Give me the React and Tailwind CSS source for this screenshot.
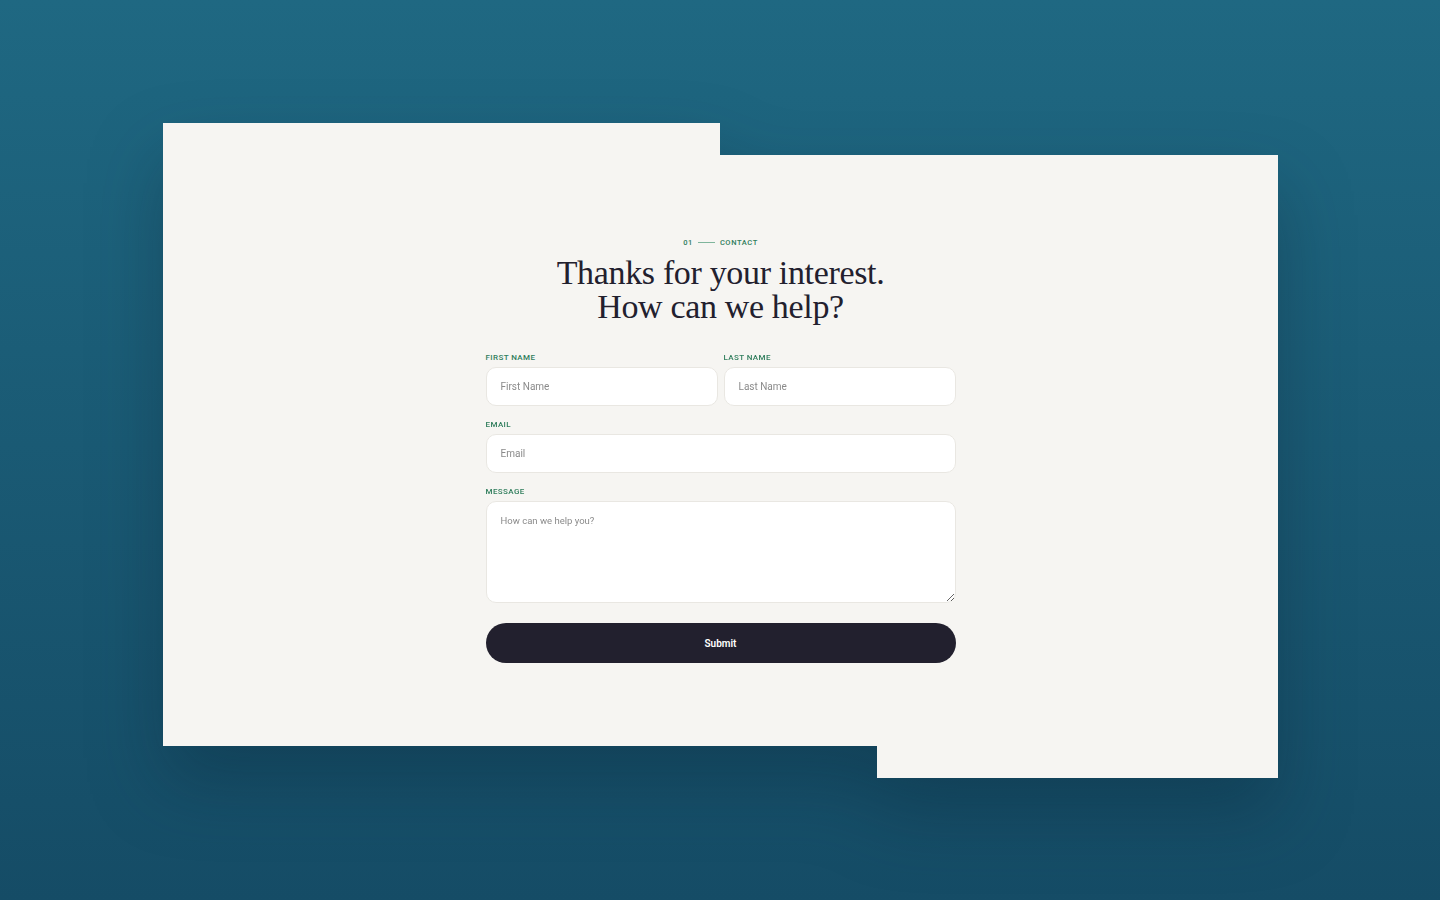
import React from 'react';

// Kontaktformular auf gestufter Karte
const Label = ({ children }) => (
  <label className="mb-[4px] text-[8px] font-medium uppercase leading-[10px] tracking-[0.05em] text-[#2f7d5c]">
    {children}
  </label>
);

const Field = ({ label, placeholder, className = '' }) => (
  <div className={`flex flex-col ${className}`}>
    <Label>{label}</Label>
    <input
      type="text"
      placeholder={placeholder}
      className="h-[39px] w-full rounded-[10px] border border-[#e9e7e2] bg-white px-[14px] text-[10px] text-[#333] placeholder:text-[#8a8a8a] outline-none"
    />
  </div>
);

export default function App() {
  return (
    <div
      className="relative h-[900px] w-full overflow-hidden bg-gradient-to-b from-[#1f6882] to-[#154c66]"
      style={{ fontFamily: 'Roboto, "Noto Sans", sans-serif' }}
    >
      <div className="absolute left-[163px] top-[123px] [filter:drop-shadow(0_36px_36px_rgba(8,30,45,0.3))]">
        <div className="h-[655px] w-[1115px] bg-[#f6f5f2] [clip-path:polygon(0_0,557px_0,557px_32px,100%_32px,100%_100%,714px_100%,714px_623px,0_623px)]">
          <div className="flex flex-col items-center pt-[114px]">
            <div className="flex items-center gap-[5px] text-[7.5px] font-medium uppercase tracking-[0.08em] text-[#2f7d5c]">
              <span>01</span>
              <span className="h-px w-[17px] bg-[#7fb59c]"></span>
              <span>Contact</span>
            </div>
            <h1
              className="mt-[8px] text-center text-[34px] leading-[34px] tracking-[-0.01em] text-[#22202e]"
              style={{ fontFamily: '"Liberation Serif", "DejaVu Serif", serif' }}
            >
              Thanks for your interest.
              <br />
              How can we help?
            </h1>

            <form className="mt-[29px] flex w-[470px] flex-col" onSubmit={(e) => e.preventDefault()}>
              <div className="flex gap-[6px]">
                <Field label="First Name" placeholder="First Name" className="flex-1" />
                <Field label="Last Name" placeholder="Last Name" className="flex-1" />
              </div>
              <Field label="Email" placeholder="Email" className="mt-[14px]" />
              <div className="mt-[14px] flex flex-col">
                <Label>Message</Label>
                <textarea
                  placeholder="How can we help you?"
                  className="h-[102px] w-full rounded-[10px] border border-[#e9e7e2] bg-white px-[14px] py-[12px] text-[9.5px] text-[#333] placeholder:text-[#8a8a8a] outline-none"
                />
              </div>
              <button
                type="submit"
                className="mt-[20px] h-[40px] w-full rounded-full bg-[#22202e] text-[10px] font-semibold text-white"
              >
                Submit
              </button>
            </form>
          </div>
        </div>
      </div>
    </div>
  );
}
